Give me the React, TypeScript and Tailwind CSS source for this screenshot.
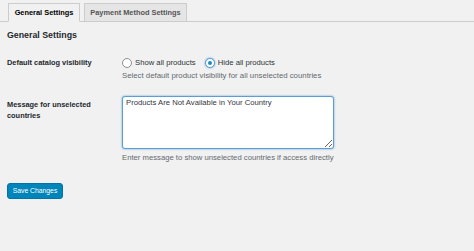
import React from 'react';

const Radio: React.FC<{ checked?: boolean; label: string }> = ({ checked, label }) => (
  <label className="flex items-center">
    <span
      className={`w-[10px] h-[10px] rounded-full bg-white border flex items-center justify-center mr-[3px] ${
        checked ? 'border-[#5b9dd9] shadow-[0_0_2px_rgba(30,140,190,0.8)]' : 'border-[#8c8f94]'
      }`}
    >
      {checked && <span className="w-[4px] h-[4px] rounded-full bg-[#1e8cbe]" />}
    </span>
    <span className="text-[7.7px] text-[#2c3338]">{label}</span>
  </label>
);

export default function App() {
  return (
    <div
      className="w-[474px] h-[251px] bg-[#f1f1f1] text-[#23282d] overflow-hidden"
      style={{ fontFamily: '"Liberation Sans", Arial, sans-serif' }}
    >
      {/* tabs */}
      <div className="flex items-end pt-[3px] pl-[8px] border-b border-[#ccc] h-[22px] gap-[4px]">
        <div className="h-[19px] -mb-px w-[72px] border border-[#ccc] border-b-[#f1f1f1] bg-[#f1f1f1] flex items-center justify-center text-[7.4px] font-bold text-[#000]">
          General Settings
        </div>
        <div className="h-[18px] w-[103px] border border-[#ccc] border-b-0 bg-[#e5e5e5] flex items-center justify-center text-[7.4px] font-bold text-[#555]">
          Payment Method Settings
        </div>
      </div>

      <div className="px-[7px]">
        <h2 className="text-[8.8px] font-bold mt-[8px] leading-[11px] text-[#23282d]">General Settings</h2>

        {/* visibility row */}
        <div className="flex mt-[16px]">
          <div className="w-[115px] pt-[1px] text-[7.4px] font-bold leading-[10px]">Default catalog visibility</div>
          <div className="flex flex-col">
            <div className="flex items-center gap-[9px] h-[12px]">
              <Radio label="Show all products" />
              <Radio checked label="Hide all products" />
            </div>
            <div className="text-[7.8px] text-[#646970] mt-[2px] leading-[10px]">
              Select default product visibility for all unselected countries
            </div>
          </div>
        </div>

        {/* message row */}
        <div className="flex mt-[15px]">
          <div className="w-[115px] pt-[3px] text-[7.4px] font-bold leading-[11px]">
            Message for unselected
            <br />
            countries
          </div>
          <div className="flex flex-col">
            <textarea
              readOnly
              defaultValue="Products Are Not Available in Your Country"
              className="w-[212px] h-[53px] resize-y bg-white border border-[#5b9dd9] rounded-[3px] shadow-[0_0_2px_rgba(30,140,190,0.8)] px-[3px] pt-[1px] text-[7.7px] leading-[10px] text-[#32373c] outline-none"
              style={{ fontFamily: '"Liberation Sans", Arial, sans-serif' }}
            />
            <div className="text-[7.7px] text-[#646970] mt-[4px] leading-[10px]">
              Enter message to show unselected countries if access directly
            </div>
          </div>
        </div>

        <button className="mt-[20px] h-[16px] w-[56px] rounded-[3px] bg-[#0085ba] border border-[#0073aa] text-white text-[6.8px] flex items-center justify-center">
          Save Changes
        </button>
      </div>
    </div>
  );
}
